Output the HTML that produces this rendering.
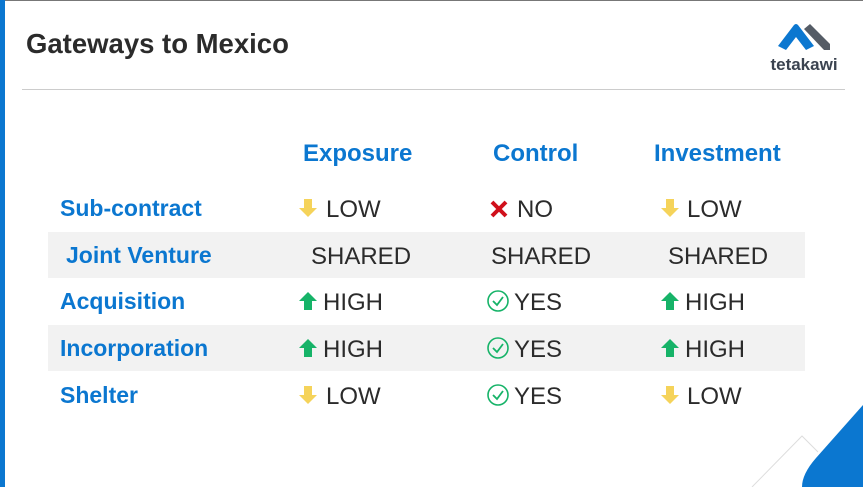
<!DOCTYPE html>
<html><head><meta charset="utf-8"><style>
body{margin:0;width:863px;height:487px;position:relative;overflow:hidden;background:#fff;font-family:"Liberation Sans",sans-serif;}
.a{position:absolute;white-space:nowrap;}
.t{font-size:24px;color:#2b2b2b;line-height:28px;margin-top:2px;}
.l{font-size:23px;color:#0b77d0;font-weight:bold;line-height:28px;}
.band{position:absolute;left:48px;width:757px;height:46px;background:#f2f2f2;}
</style></head><body>
<div class="a" style="left:0;top:0;width:863px;height:1px;background:#777"></div>
<div class="a" style="left:0;top:0;width:5px;height:487px;background:#0b77d0"></div>
<div class="a" style="left:26px;top:28px;font-size:27.5px;font-weight:bold;color:#2b2b2b">Gateways to Mexico</div>
<div class="a" style="left:22px;top:89px;width:823px;height:1px;background:#ccc"></div>
<svg class="a" style="left:764px;top:20px" width="80" height="54" viewBox="0 0 80 54">
<path d="M14 26 L30 5 Q32 3 34 5 L50 26 L42 30 L32 17 L22 30 Z" fill="#0b77d0"/>
<path d="M40 9 L46 4 L66 24 L66 30 L60 30 Z" fill="#555c66"/>
<text x="40" y="50" font-family="Liberation Sans" font-weight="bold" font-size="17" fill="#3b4350" text-anchor="middle">tetakawi</text>
</svg>
<div class="band" style="top:232px"></div>
<div class="band" style="top:325px"></div>
<div class="a l" style="left:303px;top:140px;font-size:24px">Exposure</div>
<div class="a l" style="left:493px;top:140px;font-size:24px">Control</div>
<div class="a l" style="left:654px;top:140px;font-size:24px">Investment</div>
<div class="a l" style="left:60px;top:194px">Sub-contract</div>
<div class="a l" style="left:66px;top:241px">Joint Venture</div>
<div class="a l" style="left:60px;top:287px">Acquisition</div>
<div class="a l" style="left:60px;top:334px">Incorporation</div>
<div class="a l" style="left:60px;top:381px">Shelter</div>
<svg width="0" height="0" style="position:absolute"><defs>
<path id="dn" d="M5 0 H13 V9 H18 L9 18 L0 9 H5 Z" fill="#f5d35a"/>
<path id="up" d="M9 0 L18 9 H13 V18 H5 V9 H0 Z" fill="#16b368"/>
<g id="ok"><circle cx="11" cy="11" r="10" fill="none" stroke="#16b368" stroke-width="1.6"/><path d="M6 11 L10 15 L16 7" fill="none" stroke="#16b368" stroke-width="1.8"/></g>
</defs></svg>
<svg class="a" style="left:299px;top:199px" width="18" height="18"><use href="#dn"/></svg>
<div class="a t" style="left:326px;top:194px">LOW</div>
<svg class="a" style="left:490px;top:200px" width="18" height="18"><path d="M2 2 L16 16 M16 2 L2 16" stroke="#d0101b" stroke-width="4"/></svg>
<div class="a t" style="left:517px;top:194px">NO</div>
<svg class="a" style="left:661px;top:199px" width="18" height="18"><use href="#dn"/></svg>
<div class="a t" style="left:687px;top:194px">LOW</div>
<div class="a t" style="left:311px;top:241px">SHARED</div>
<div class="a t" style="left:491px;top:241px">SHARED</div>
<div class="a t" style="left:668px;top:241px">SHARED</div>
<svg class="a" style="left:299px;top:292px" width="18" height="18"><use href="#up"/></svg>
<div class="a t" style="left:323px;top:287px">HIGH</div>
<svg class="a" style="left:487px;top:290px" width="22" height="22"><use href="#ok"/></svg>
<div class="a t" style="left:514px;top:287px">YES</div>
<svg class="a" style="left:661px;top:292px" width="18" height="18"><use href="#up"/></svg>
<div class="a t" style="left:685px;top:287px">HIGH</div>
<svg class="a" style="left:299px;top:339px" width="18" height="18"><use href="#up"/></svg>
<div class="a t" style="left:323px;top:334px">HIGH</div>
<svg class="a" style="left:487px;top:337px" width="22" height="22"><use href="#ok"/></svg>
<div class="a t" style="left:514px;top:334px">YES</div>
<svg class="a" style="left:661px;top:339px" width="18" height="18"><use href="#up"/></svg>
<div class="a t" style="left:685px;top:334px">HIGH</div>
<svg class="a" style="left:299px;top:386px" width="18" height="18"><use href="#dn"/></svg>
<div class="a t" style="left:326px;top:381px">LOW</div>
<svg class="a" style="left:487px;top:384px" width="22" height="22"><use href="#ok"/></svg>
<div class="a t" style="left:514px;top:381px">YES</div>
<svg class="a" style="left:661px;top:386px" width="18" height="18"><use href="#dn"/></svg>
<div class="a t" style="left:687px;top:381px">LOW</div>
<svg class="a" style="left:740px;top:400px" width="123" height="87">
<path d="M12 87 L62 36 L78 52" fill="none" stroke="#ddd" stroke-width="1"/>
<path d="M123 5 L76 58 Q62 74 62 87 L123 87 Z" fill="#0b77d0"/>
</svg>
</body></html>
